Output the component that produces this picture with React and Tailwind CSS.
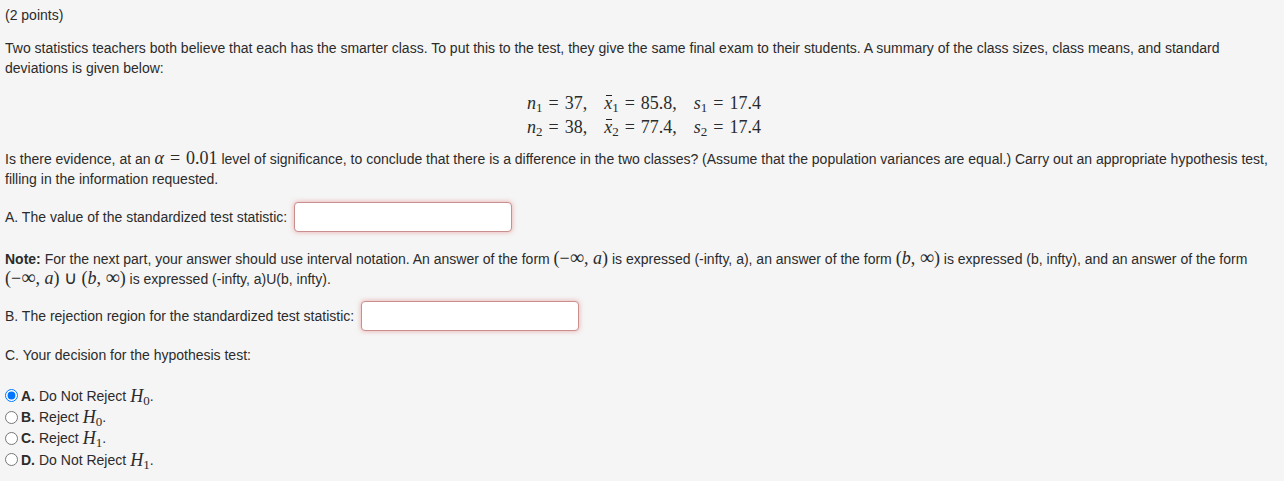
import React from "react";

const M = ({ children, className = "" }) => (
  <span className={"font-['Liberation_Serif','Times_New_Roman',serif] text-[18px] leading-none " + className}>{children}</span>
);
const I = ({ children }) => <span className="italic">{children}</span>;
const Sub = ({ children }) => (
  <sub className="text-[13px] not-italic relative top-[3px]">{children}</sub>
);
const Eq = () => <span className="mx-[6px]">=</span>;

const Xbar = () => (
  <span className="relative inline-block italic">
    x
    <span className="absolute left-[2px] right-[0px] top-[1px] h-[1px] bg-[#222]"></span>
  </span>
);

const Inf = () => <span className="text-[20px]">∞</span>;

const Line = ({ children }) => <div className="h-[20px] leading-[20px] whitespace-nowrap">{children}</div>;

const Input = () => (
  <input
    type="text"
    className="bg-white w-[218px] h-[30px] border border-[#c98e8e] rounded-[4px] shadow-[0_0_5px_rgba(225,90,90,0.5)] outline-none"
  />
);

const Radio = ({ letter, text, sub, checked }) => (
  <label className="flex items-center h-[21.4px] whitespace-nowrap">
    <input
      type="radio"
      name="dec"
      defaultChecked={checked}
      className="m-0 mr-[3px] w-[13px] h-[13px]"
    />
    <span className="font-bold">{letter}</span>
    <span className="ml-[4px]">{text}</span>
    <M className="ml-[4px]">
      <I>H</I>
      <Sub>{sub}</Sub>
    </M>
    <span>.</span>
  </label>
);

export default function App() {
  return (
    <div className="min-h-[481px] bg-[#f5f5f5] text-[#2b2b2b] font-['Liberation_Sans',Arial,sans-serif] text-[14px] leading-[20px] px-[5px] pt-[5px]">
      <Line>(2 points)</Line>

      <div className="mt-[13px]">
        <Line>
          Two statistics teachers both believe that each has the smarter class. To put this to the test, they give the same final exam to their students. A summary of the class sizes, class means, and standard
        </Line>
        <Line>deviations is given below:</Line>
      </div>

      <div className="mt-[13px] flex flex-col items-center pl-[4px]">
        {[
          ["1", "37", "85.8", "17.4"],
          ["2", "38", "77.4", "17.4"],
        ].map(([i, n, x, s]) => (
          <div key={i} className="h-[24px] flex items-center whitespace-nowrap">
            <M>
              <I>n</I>
              <Sub>{i}</Sub>
              <Eq />
              {n},
              <span className="ml-[17px]"></span>
              <Xbar />
              <Sub>{i}</Sub>
              <Eq />
              {x},
              <span className="ml-[17px]"></span>
              <I>s</I>
              <Sub>{i}</Sub>
              <Eq />
              {s}
            </M>
          </div>
        ))}
      </div>

      <div className="mt-[10px]">
        <Line>
          Is there evidence, at an{" "}
          <M>
            <I>α</I>
            <Eq />
            0.01
          </M>{" "}
          level of significance, to conclude that there is a difference in the two classes? (Assume that the population variances are equal.) Carry out an appropriate hypothesis test,
        </Line>
        <Line>filling in the information requested.</Line>
      </div>

      <div className="mt-[13px] flex items-center">
        <span>A. The value of the standardized test statistic:</span>
        <span className="ml-[7px] flex">
          <Input />
        </span>
      </div>

      <div className="mt-[15px]">
        <Line>
          <span className="font-bold">Note:</span> For the next part, your answer should use interval notation. An answer of the form{" "}
          <M>
            (−<Inf />, <I>a</I>)
          </M>{" "}
          is expressed (-infty, a), an answer of the form{" "}
          <M>
            (<I>b</I>, <Inf />)
          </M>{" "}
          is expressed (b, infty), and an answer of the form
        </Line>
        <Line>
          <M>
            (−<Inf />, <I>a</I>) ∪ (<I>b</I>, <Inf />)
          </M>{" "}
          is expressed (-infty, a)U(b, infty).
        </Line>
      </div>

      <div className="mt-[14px] flex items-center">
        <span>B. The rejection region for the standardized test statistic:</span>
        <span className="ml-[7px] flex">
          <Input />
        </span>
      </div>

      <div className="mt-[14px]">
        <Line>C. Your decision for the hypothesis test:</Line>
      </div>

      <div className="mt-[20px] flex flex-col">
        <Radio letter="A." text="Do Not Reject" sub="0" checked />
        <Radio letter="B." text="Reject" sub="0" />
        <Radio letter="C." text="Reject" sub="1" />
        <Radio letter="D." text="Do Not Reject" sub="1" />
      </div>
    </div>
  );
}
